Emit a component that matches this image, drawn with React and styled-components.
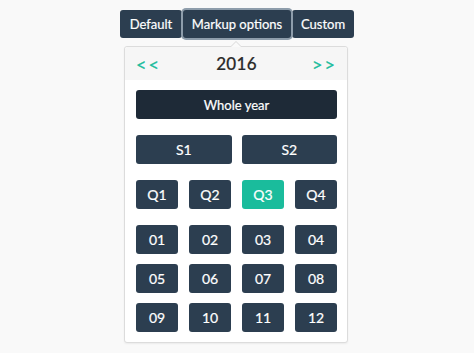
import React from "react";
import styled, { createGlobalStyle } from "styled-components";

const Global = createGlobalStyle`
  html, body { margin: 0; padding: 0; background: #f9f9f9; }
  body { font-family: Lato, "Open Sans", sans-serif; }
`;

const Page = styled.div`
  width: 474px;
  height: 353px;
  display: flex;
  flex-direction: column;
  align-items: center;
  padding-top: 10px;
  box-sizing: border-box;
`;

const Tabs = styled.div`
  display: flex;
  gap: 1px;
`;

const Tab = styled.button`
  height: 28px;
  width: ${(p) => p.$w}px;
  border: none;
  border-radius: 3px;
  background: #2c3e50;
  color: #fff;
  font-family: Lato, sans-serif;
  font-size: 13px;
  padding: 0;
  cursor: pointer;
  box-shadow: ${(p) => (p.$active ? "0 0 0 2px #8e9dab" : "none")};
  position: relative;
  z-index: ${(p) => (p.$active ? 1 : 0)};
  -webkit-text-stroke: 0.2px #fff;
`;

const Panel = styled.div`
  position: relative;
  margin-top: 8px;
  margin-right: 2px;
  width: 224px;
  box-sizing: border-box;
  background: #fff;
  border: 1px solid #dcdcdc;
  border-radius: 3px;
  box-shadow: 0 1px 2px rgba(0, 0, 0, 0.06);
  padding-bottom: 10px;
`;

const Caret = styled.div`
  position: absolute;
  top: -5px;
  left: 106px;
  width: 0;
  height: 0;
  border-left: 5px solid transparent;
  border-right: 5px solid transparent;
  border-bottom: 5px solid #fafafa;
  filter: drop-shadow(0 -1px 0 #d8d8d8);
`;

const Header = styled.div`
  height: 33px;
  background: #f6f6f6;
  display: flex;
  align-items: center;
  justify-content: space-between;
  padding: 0 10px 0 11px;
  border-radius: 3px 3px 0 0;
`;

const Nav = styled.span`
  color: #1abc9c;
  font-size: 18px;
  line-height: 18px;
  letter-spacing: 2px;
  font-family: Lato, sans-serif;
  font-weight: 400;
  width: 26px;
  text-align: ${(p) => p.$align};
  -webkit-text-stroke: 0.3px #1abc9c;
`;

const Year = styled.span`
  font-size: 17px;
  color: #2a2a2a;
  font-weight: 500;
  letter-spacing: 0.3px;
  -webkit-text-stroke: 0.2px #2a2a2a;
`;

const Body = styled.div`
  padding: 10px 10px 0 11px;
  display: flex;
  flex-direction: column;
`;

const Grid = styled.div`
  display: grid;
  grid-template-columns: repeat(${(p) => p.$cols}, 1fr);
  column-gap: ${(p) => p.$gap}px;
  row-gap: 10px;
  margin-top: ${(p) => p.$mt}px;
`;

const Btn = styled.button`
  height: 29px;
  border: none;
  border-radius: 3px;
  background: ${(p) => (p.$variant === "dark" ? "#1e2a37" : p.$variant === "active" ? "#1abc9c" : "#2c3e50")};
  color: #fff;
  font-family: Lato, sans-serif;
  font-size: ${(p) => (p.$small ? 13 : 14)}px;
  padding: 0;
  cursor: pointer;
  -webkit-text-stroke: 0.2px #fff;
`;

const months = ["01", "02", "03", "04", "05", "06", "07", "08", "09", "10", "11", "12"];

export default function App() {
  return (
    <Page>
      <Global />
      <Tabs>
        <Tab $w={62}>Default</Tab>
        <Tab $w={108} $active>Markup options</Tab>
        <Tab $w={62}>Custom</Tab>
      </Tabs>
      <Panel>
        <Caret />
        <Header>
          <Nav $align="left">&lt;&lt;</Nav>
          <Year>2016</Year>
          <Nav $align="right">&gt;&gt;</Nav>
        </Header>
        <Body>
          <Btn $variant="dark" $small>Whole year</Btn>
          <Grid $cols={2} $gap={10} $mt={16}>
            <Btn>S1</Btn>
            <Btn>S2</Btn>
          </Grid>
          <Grid $cols={4} $gap={11} $mt={16}>
            <Btn>Q1</Btn>
            <Btn>Q2</Btn>
            <Btn $variant="active">Q3</Btn>
            <Btn>Q4</Btn>
          </Grid>
          <Grid $cols={4} $gap={11} $mt={16}>
            {months.map((m) => (
              <Btn key={m}>{m}</Btn>
            ))}
          </Grid>
        </Body>
      </Panel>
    </Page>
  );
}
